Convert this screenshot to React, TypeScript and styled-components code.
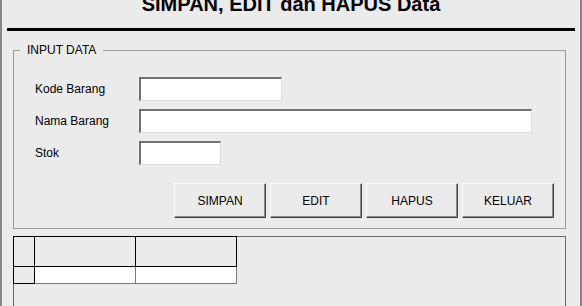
import { Fragment } from "react";
import styled, { createGlobalStyle } from "styled-components";

const GlobalStyle = createGlobalStyle`
  html, body {
    margin: 0;
    padding: 0;
    background: #ebebeb;
  }
  * {
    box-sizing: border-box;
  }
`;

const Frame = styled.div`
  width: 582px;
  height: 306px;
  overflow: hidden;
  background: #ebebeb;
  border-left: 2px solid #858585;
  border-right: 2px solid #858585;
  font-family: "Liberation Sans", Arial, sans-serif;
  font-size: 12px;
  color: #000;
`;

const Title = styled.h1`
  margin: -7px 0 0;
  font-size: 20px;
  line-height: 22px;
  font-weight: bold;
  text-align: center;
  color: #000;
`;

const Rule = styled.div`
  height: 3px;
  margin: 13px 5px 0;
  background: #000;
`;

const Group = styled.fieldset`
  width: 553px;
  margin: 12px 0 0 11px;
  padding: 0;
  border: 1px solid #9a9a9a;
`;

const Legend = styled.legend`
  margin-left: 6px;
  padding: 0 7px;
  line-height: 14px;
`;

const Body = styled.div`
  padding: 20px 11px 10px 21px;
`;

const Form = styled.div`
  display: grid;
  grid-template-columns: 104px 1fr;
  row-gap: 8px;
  align-items: center;
`;

const Label = styled.label`
  line-height: 14px;
`;

const Field = styled.input<{ $width: number }>`
  width: ${({ $width }) => $width}px;
  height: 24px;
  margin: 0;
  padding: 0 3px;
  background: #fff;
  border-top: 2px solid #727272;
  border-left: 2px solid #727272;
  border-bottom: 1px solid #dedede;
  border-right: 1px solid #dedede;
  font: inherit;

  &:focus {
    outline: none;
  }
`;

const Actions = styled.div`
  display: flex;
  justify-content: flex-end;
  gap: 4px;
  margin-top: 18px;
`;

const Button = styled.button`
  width: 92px;
  height: 35px;
  padding: 0;
  background: #ebebeb;
  border-top: 1px solid #fdfdfd;
  border-left: 1px solid #fdfdfd;
  border-bottom: 1px solid #404040;
  border-right: 1px solid #404040;
  box-shadow: inset -1px -1px 0 #8c8c8c;
  font-family: "Liberation Sans", Arial, sans-serif;
  font-size: 12px;
  color: #000;
  cursor: pointer;
`;

const Panel = styled.div`
  width: 553px;
  height: 80px;
  margin: 7px 0 0 11px;
  border: 1px solid #6a6a6a;
  border-bottom: none;
`;

const Grid = styled.table`
  margin: -1px 0 0 -1px;
  border-collapse: collapse;
`;

const HeadCell = styled.th<{ $width: number }>`
  width: ${({ $width }) => $width}px;
  height: 30px;
  padding: 0;
  border: 1px solid #000;
  background: #ebebeb;
`;

const RowHead = styled.th`
  height: 17px;
  padding: 0;
  border: 1px solid #000;
  background: #ebebeb;
`;

const Cell = styled.td`
  height: 17px;
  padding: 0;
  background: #fff;
  border-top: 1px solid #000;
  border-right: 1px solid #7c7c7c;
  border-bottom: 1px solid #7c7c7c;
`;

const fields = [
  { id: "kode", label: "Kode Barang", width: 143 },
  { id: "nama", label: "Nama Barang", width: 393 },
  { id: "stok", label: "Stok", width: 82 },
];

const actions = ["SIMPAN", "EDIT", "HAPUS", "KELUAR"];

export default function App() {
  return (
    <>
      <GlobalStyle />
      <Frame>
        <Title>SIMPAN, EDIT dan HAPUS Data</Title>
        <Rule />
        <Group>
          <Legend>INPUT DATA</Legend>
          <Body>
            <Form>
              {fields.map((f) => (
                <Fragment key={f.id}>
                  <Label htmlFor={`id_${f.id}`}>{f.label}</Label>
                  <Field id={`id_${f.id}`} $width={f.width} />
                </Fragment>
              ))}
            </Form>
            <Actions>
              {actions.map((a) => (
                <Button key={a}>{a}</Button>
              ))}
            </Actions>
          </Body>
        </Group>
        <Panel>
          <Grid>
            <thead>
              <tr>
                <HeadCell $width={21} />
                <HeadCell $width={101} />
                <HeadCell $width={101} />
              </tr>
            </thead>
            <tbody>
              <tr>
                <RowHead />
                <Cell />
                <Cell />
              </tr>
            </tbody>
          </Grid>
        </Panel>
      </Frame>
    </>
  );
}
